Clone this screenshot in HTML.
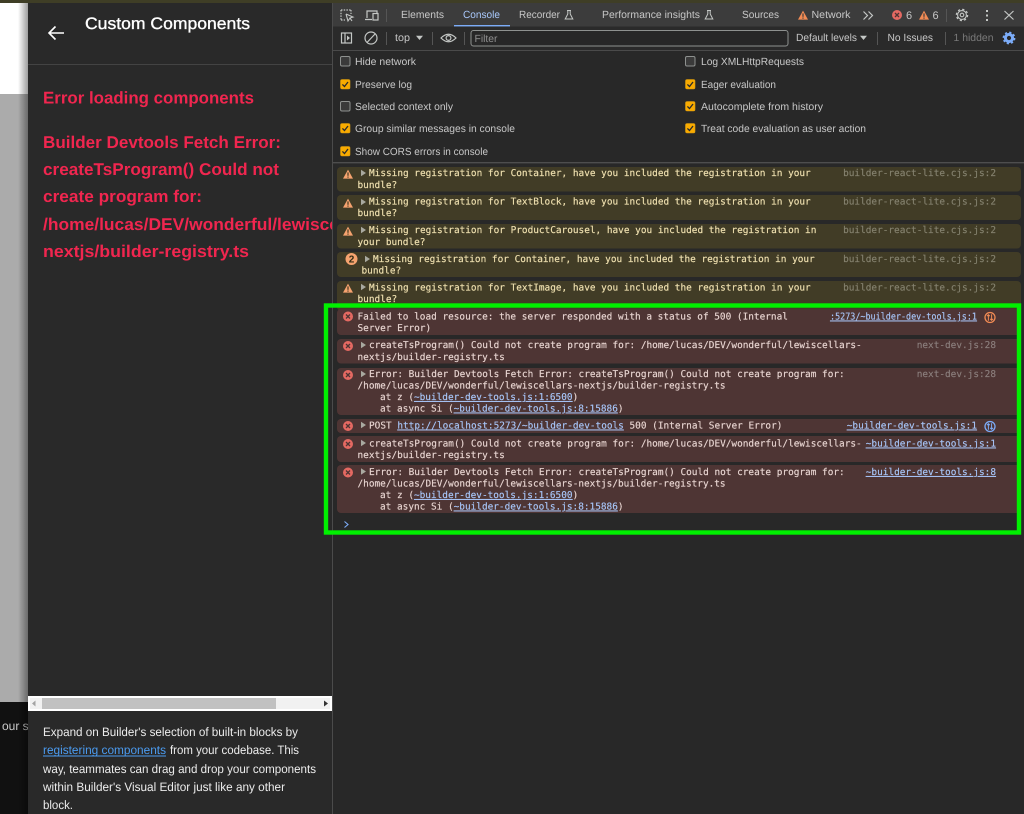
<!DOCTYPE html>
<html><head><meta charset="utf-8"><title>Custom Components</title>
<style>
html,body{margin:0;padding:0;background:#282828;width:1024px;height:814px;overflow:hidden}
svg{display:block;position:absolute;left:0;top:0;text-rendering:geometricPrecision}
.u{font-family:"Liberation Sans",sans-serif;font-size:10.4px;fill:#c7c7c7}
.m{font-family:"DejaVu Sans Mono",monospace;font-size:9.42px;stroke-width:.14px}
.w{fill:#f0e1b0;stroke:#f0e1b0}.e{fill:#e9d6d2;stroke:#e9d6d2}.s{fill:#85826f;stroke:#85826f;text-anchor:end}.se{fill:#8b7f7d;stroke:#8b7f7d;text-anchor:end}
.l{fill:#a8c7fa;stroke:#a8c7fa;text-decoration:underline}
.r{font-family:"Liberation Sans",sans-serif;font-weight:bold;font-size:17px;fill:#f0264f}
.b{font-family:"Liberation Sans",sans-serif;font-size:12.2px;fill:#ececec}
.ic{fill:none;stroke:#c4c7c5;stroke-width:1.2}
</style></head><body>
<svg width="1024" height="814" viewBox="0 0 1024 814">
<defs>
<clipPath id="pc"><rect x="28" y="0" width="304" height="814"/></clipPath>
<clipPath id="lc"><rect x="0" y="700" width="28" height="114"/></clipPath>
<clipPath id="wc"><rect x="333" y="160" width="691" height="144"/></clipPath>
<linearGradient id="sh" x1="0" x2="1" y1="0" y2="0"><stop offset="0" stop-color="#000" stop-opacity="0"/><stop offset="1" stop-color="#000" stop-opacity=".38"/></linearGradient>
<g id="warn"><path d="M0 4.6 L5 -4.4 L10 4.6 Z" fill="#f6a36f"/><rect x="4.4" y="-1.6" width="1.2" height="3.4" fill="#41391f"/><rect x="4.4" y="2.5" width="1.2" height="1.2" fill="#41391f"/></g>
<g id="err"><circle cx="5" cy="0" r="5" fill="#e46962"/><path d="M3 -2 L7 2 M7 -2 L3 2" stroke="#4e3534" stroke-width="1.3"/></g>
<path id="tri" d="M0 -3.2 L5 0 L0 3.2 Z" fill="#a9a9a0"/>
<g id="cb"><rect x="0.5" y="-4.5" width="9.5" height="9.5" rx="1.5" fill="#f9ab00" stroke="#d89a10" stroke-width=".6"/><path d="M2.4 0.4 L4.5 2.5 L8 -2" fill="none" stroke="#2a2a2a" stroke-width="1.3"/></g>
<g id="cu"><rect x="0.5" y="-4.5" width="9.5" height="9.5" rx="1.5" fill="#3a3a3a" stroke="#8e918f" stroke-width="1"/></g>
<g id="fl"><path d="M-2 -4.5 H2 M-1.2 -4.5 V-1 L-3.8 4 H3.8 L1.2 -1 V-4.5" fill="none" stroke="#c4c7c5" stroke-width="1"/></g>
<g id="net"><circle cx="0" cy="0" r="5" fill="none" stroke-width="1.3"/><path d="M-1.6 3.2 V-2.8 M-3 -1.4 L-1.6 -2.8 L-.2 -1.4 M1.6 -3.2 V2.8 M.2 1.4 L1.6 2.8 L3 1.4" fill="none" stroke-width="1"/></g>
</defs>

<!-- page behind -->
<rect x="0" y="0" width="1024" height="814" fill="#282828"/>
<rect x="0" y="3" width="28" height="91" fill="#ffffff"/>
<rect x="0" y="94" width="28" height="608" fill="#ababab"/>
<rect x="0" y="702" width="28" height="112" fill="#111111"/>
<text x="2" y="730" clip-path="url(#lc)" font-family="Liberation Sans,sans-serif" font-size="12px" fill="#c9c9c9">our se</text>
<rect x="18" y="3" width="10" height="811" fill="url(#sh)"/>
<rect x="0" y="0" width="1024" height="3" fill="#3f3e26"/>

<!-- left panel -->
<rect x="28" y="3" width="304" height="811" fill="#292929"/>
<rect x="28" y="64" width="304" height="1" fill="#434343"/>
<path d="M49.5 33 H64 M55.5 26.5 L49 33 L55.5 39.5" fill="none" stroke="#fff" stroke-width="1.6"/>
<text x="85" y="29" textLength="165" lengthAdjust="spacingAndGlyphs" font-family="Liberation Sans,sans-serif" font-size="16.5px" fill="#fff" stroke="#fff" stroke-width=".35">Custom Components</text>
<text class="r" x="43" y="103.5" textLength="211" lengthAdjust="spacingAndGlyphs">Error loading components</text>
<text class="r" x="43" y="148" textLength="238" lengthAdjust="spacingAndGlyphs">Builder Devtools Fetch Error:</text>
<text class="r" x="43" y="175" textLength="236" lengthAdjust="spacingAndGlyphs">createTsProgram() Could not</text>
<text class="r" x="43" y="202" textLength="159" lengthAdjust="spacingAndGlyphs">create program for:</text>
<g clip-path="url(#pc)"><text class="r" x="43" y="230" textLength="296" lengthAdjust="spacingAndGlyphs">/home/lucas/DEV/wonderful/lewisce</text></g>
<text class="r" x="43" y="257" textLength="206" lengthAdjust="spacingAndGlyphs">nextjs/builder-registry.ts</text>

<rect x="28" y="696" width="304" height="15" fill="#ffffff"/>
<rect x="30" y="698" width="300" height="11" fill="#f1f1f1"/>
<rect x="42" y="698" width="234" height="11" fill="#c1c1c1"/>
<path d="M35.5 700.5 V706.5 L32 703.5 Z" fill="#a3a3a3"/>
<path d="M324 700.5 V706.5 L328 703.5 Z" fill="#333"/>
<text class="b" x="43" y="736" textLength="255" lengthAdjust="spacingAndGlyphs">Expand on Builder's selection of built-in blocks by</text>
<text class="b" x="43" y="754" textLength="123" lengthAdjust="spacingAndGlyphs" style="fill:#4b9bf0">registering components</text>
<rect x="43" y="755.5" width="123" height="1" fill="#4b9bf0"/>
<text class="b" x="170" y="754" textLength="129" lengthAdjust="spacingAndGlyphs">from your codebase. This</text>
<text class="b" x="43" y="773" textLength="273" lengthAdjust="spacingAndGlyphs">way, teammates can drag and drop your components</text>
<text class="b" x="43" y="791" textLength="242" lengthAdjust="spacingAndGlyphs">within Builder's Visual Editor just like any other</text>
<text class="b" x="43" y="809" textLength="30" lengthAdjust="spacingAndGlyphs">block.</text>

<!-- devtools -->
<rect x="332" y="3" width="1" height="811" fill="#4b4b4b"/>
<rect x="333" y="3" width="691" height="811" fill="#282828"/>
<rect x="333" y="3" width="691" height="23" fill="#3c3c3c"/>
<rect x="333" y="26" width="691" height="24" fill="#2a2a2a"/>
<rect x="333" y="26" width="691" height="1" fill="#333"/>
<rect x="333" y="50" width="691" height="1" fill="#4a4a4a"/>
<rect x="333" y="162" width="691" height="1.4" fill="#4e4e4e"/>

<!-- tab row -->
<path d="M341 10 H351 M341 20 H345 M341 10 V20 M351 10 V14" fill="none" stroke="#c4c7c5" stroke-width="1.2" stroke-dasharray="1.5 1.2"/>
<path d="M346 14 L353 17 L350 18 L352 21 M346 14 L348 21 L350 18" fill="none" stroke="#c4c7c5" stroke-width="1.1"/>
<path class="ic" d="M367 18 V11 H377 V13 M365 19.5 H372"/><rect class="ic" x="373" y="13.5" width="5" height="6.5"/>
<rect x="386" y="9" width="1" height="13" fill="#555"/>
<text class="u" x="401" y="18" textLength="43" lengthAdjust="spacingAndGlyphs">Elements</text>
<text class="u" x="463" y="18" textLength="37" lengthAdjust="spacingAndGlyphs" style="fill:#a8c7fa">Console</text>
<rect x="454" y="25" width="56" height="1.4" fill="#7cacf8"/>
<text class="u" x="519" y="18" textLength="41" lengthAdjust="spacingAndGlyphs">Recorder</text>
<use href="#fl" x="569" y="15"/>
<text class="u" x="602" y="18" textLength="98" lengthAdjust="spacingAndGlyphs">Performance insights</text>
<use href="#fl" x="709" y="15"/>
<text class="u" x="742" y="18" textLength="37" lengthAdjust="spacingAndGlyphs">Sources</text>
<g transform="translate(798,15)"><path d="M0 4.6 L5 -4.4 L10 4.6 Z" fill="#f28b54"/><rect x="4.4" y="-1.6" width="1.2" height="3.4" fill="#3c3c3c"/><rect x="4.4" y="2.5" width="1.2" height="1.2" fill="#3c3c3c"/></g>
<text class="u" x="811.5" y="18" textLength="39" lengthAdjust="spacingAndGlyphs">Network</text>
<path class="ic" d="M863.5 11.5 L867.5 15.5 L863.5 19.5 M868.5 11.5 L872.5 15.5 L868.5 19.5"/>
<use href="#err" x="892" y="15"/>
<text class="u" x="906" y="19" style="font-size:11px">6</text>
<g transform="translate(919,15)"><path d="M0 4.6 L5 -4.4 L10 4.6 Z" fill="#f28b54"/><rect x="4.4" y="-1.6" width="1.2" height="3.4" fill="#3c3c3c"/><rect x="4.4" y="2.5" width="1.2" height="1.2" fill="#3c3c3c"/></g>
<text class="u" x="932.5" y="19" style="font-size:11px">6</text>
<rect x="946" y="9" width="1" height="13" fill="#555"/>
<g transform="translate(962,15)" fill="none" stroke="#c4c7c5"><circle r="5.6" stroke-width="1.3" stroke-dasharray="2.2 2.2"/><circle r="4.4" stroke-width="1.1"/><circle r="1.8" stroke-width="1.1"/></g>
<rect x="986" y="10" width="2" height="2" fill="#c4c7c5"/><rect x="986" y="14.5" width="2" height="2" fill="#c4c7c5"/><rect x="986" y="19" width="2" height="2" fill="#c4c7c5"/>
<path class="ic" d="M1004.5 11 L1013.5 19.5 M1013.5 11 L1004.5 19.5"/>

<!-- filter row -->
<rect class="ic" x="341.5" y="33" width="10" height="10"/><path class="ic" d="M345 33 V43"/><path d="M347 35.5 L350 38 L347 40.5 Z" fill="#c4c7c5"/>
<circle class="ic" cx="371" cy="38" r="6"/><path class="ic" d="M367 42.5 L375.5 33.5"/>
<rect x="386" y="32" width="1" height="13" fill="#555"/>
<text class="u" x="395" y="41" textLength="15" lengthAdjust="spacingAndGlyphs">top</text>
<path d="M416 35.8 H423 L419.5 40 Z" fill="#c4c7c5"/>
<rect x="432" y="32" width="1" height="13" fill="#555"/>
<path class="ic" d="M441 38 Q448.5 30.5 456 38 Q448.5 45.5 441 38 Z"/><circle class="ic" cx="448.5" cy="38" r="2.4"/>
<rect x="464" y="32" width="1" height="13" fill="#555"/>
<rect x="471" y="30.5" width="317" height="15.5" rx="2.5" fill="#272727" stroke="#8e918f" stroke-width="1"/>
<text class="u" x="474.5" y="42" textLength="23" lengthAdjust="spacingAndGlyphs" style="fill:#8f8f8f">Filter</text>
<text class="u" x="796" y="41" textLength="61" lengthAdjust="spacingAndGlyphs">Default levels</text>
<path d="M860 35.8 H867 L863.5 40 Z" fill="#c4c7c5"/>
<rect x="877" y="32" width="1" height="13" fill="#555"/>
<text class="u" x="887.5" y="41" textLength="45.5" lengthAdjust="spacingAndGlyphs">No Issues</text>
<rect x="945" y="32" width="1" height="13" fill="#555"/>
<text class="u" x="953.5" y="41" textLength="40" lengthAdjust="spacingAndGlyphs" style="fill:#7a7a7a">1 hidden</text>
<g transform="translate(1009,38)" fill="none"><circle r="3.6" stroke="#7cacf8" stroke-width="3"/><circle r="5.6" stroke="#7cacf8" stroke-width="1.6" stroke-dasharray="2.2 2.2"/></g>

<!-- settings -->
<g class="u" style="font-size:10.4px">
<use href="#cu" x="340" y="61"/><text class="u" x="355" y="65" textLength="61" lengthAdjust="spacingAndGlyphs">Hide network</text>
<use href="#cb" x="340" y="84"/><text class="u" x="355" y="88" textLength="57" lengthAdjust="spacingAndGlyphs">Preserve log</text>
<use href="#cu" x="340" y="106"/><text class="u" x="355" y="110" textLength="98" lengthAdjust="spacingAndGlyphs">Selected context only</text>
<use href="#cb" x="340" y="128"/><text class="u" x="355" y="132" textLength="160" lengthAdjust="spacingAndGlyphs">Group similar messages in console</text>
<use href="#cb" x="340" y="151"/><text class="u" x="355" y="155" textLength="133" lengthAdjust="spacingAndGlyphs">Show CORS errors in console</text>
<use href="#cu" x="685" y="61"/><text class="u" x="701" y="65" textLength="103" lengthAdjust="spacingAndGlyphs">Log XMLHttpRequests</text>
<use href="#cb" x="685" y="84"/><text class="u" x="701" y="88" textLength="75" lengthAdjust="spacingAndGlyphs">Eager evaluation</text>
<use href="#cb" x="685" y="106"/><text class="u" x="701" y="110" textLength="122" lengthAdjust="spacingAndGlyphs">Autocomplete from history</text>
<use href="#cb" x="685" y="128"/><text class="u" x="701" y="132" textLength="165" lengthAdjust="spacingAndGlyphs">Treat code evaluation as user action</text>
</g>

<!-- warnings -->
<g fill="#413c26">
<rect x="337" y="167" width="684" height="24.5" rx="4"/>
<rect x="337" y="195" width="684" height="25" rx="4"/>
<rect x="337" y="224" width="684" height="24.5" rx="4"/>
<rect x="337" y="252" width="684" height="25" rx="4"/>
<rect x="337" y="281" width="684" height="30" rx="4"/>
</g>
<g>
<use href="#warn" x="343" y="174"/><use href="#tri" x="361" y="173"/>
<text class="m w" x="369" y="176">Missing registration for Container, have you included the registration in your</text>
<text class="m w" x="357.5" y="188">bundle?</text>
<text class="m s" x="996" y="176">builder-react-lite.cjs.js:2</text>

<use href="#warn" x="343" y="203"/><use href="#tri" x="361" y="202"/>
<text class="m w" x="369" y="204.5">Missing registration for TextBlock, have you included the registration in your</text>
<text class="m w" x="357.5" y="216">bundle?</text>
<text class="m s" x="996" y="204.5">builder-react-lite.cjs.js:2</text>

<use href="#warn" x="343" y="231"/><use href="#tri" x="361" y="230"/>
<text class="m w" x="369" y="233">Missing registration for ProductCarousel, have you included the registration in</text>
<text class="m w" x="357.5" y="245">your bundle?</text>
<text class="m s" x="996" y="233">builder-react-lite.cjs.js:2</text>

<circle cx="351.5" cy="259" r="6" fill="#f6a36f"/>
<text x="351.5" y="262.5" text-anchor="middle" font-family="Liberation Sans,sans-serif" font-weight="bold" font-size="10px" fill="#332c14">2</text>
<use href="#tri" x="365" y="259"/>
<text class="m w" x="373" y="262">Missing registration for Container, have you included the registration in your</text>
<text class="m w" x="361.5" y="273.5">bundle?</text>
<text class="m s" x="996" y="262">builder-react-lite.cjs.js:2</text>

<use href="#warn" x="343" y="288"/><use href="#tri" x="361" y="287"/>
<text class="m w" x="369" y="290.5">Missing registration for TextImage, have you included the registration in your</text>
<g clip-path="url(#wc)"><text class="m w" x="357.5" y="302">bundle?</text></g>
<text class="m s" x="996" y="290.5">builder-react-lite.cjs.js:2</text>
</g>

<!-- errors -->
<g fill="#4e3534">
<rect x="337" y="309" width="684" height="26" rx="4"/>
<rect x="337" y="339" width="684" height="24.5" rx="4"/>
<rect x="337" y="368" width="684" height="47" rx="4"/>
<rect x="337" y="419" width="684" height="14" rx="4"/>
<rect x="337" y="436" width="684" height="26" rx="4"/>
<rect x="337" y="465" width="684" height="48" rx="4"/>
</g>

<use href="#err" x="343" y="316.5"/>
<text class="m e" x="357.5" y="319.5">Failed to load resource: the server responded with a status of 500 (Internal</text>
<text class="m e" x="357.5" y="331">Server Error)</text>
<text class="m l" x="830" y="319.5" textLength="147" lengthAdjust="spacingAndGlyphs">:5273/~builder-dev-tools.js:1</text>
<g transform="translate(990,317.5)" stroke="#f28b54"><use href="#net"/></g>

<use href="#err" x="343" y="346"/><use href="#tri" x="361" y="345"/>
<text class="m e" x="369" y="348">createTsProgram() Could not create program for: /home/lucas/DEV/wonderful/lewiscellars-</text>
<text class="m e" x="357.5" y="360">nextjs/builder-registry.ts</text>
<text class="m se" x="996" y="348">next-dev.js:28</text>

<use href="#err" x="343" y="375"/><use href="#tri" x="361" y="374"/>
<text class="m e" x="369" y="377">Error: Builder Devtools Fetch Error: createTsProgram() Could not create program for:</text>
<text class="m e" x="357.5" y="388.5">/home/lucas/DEV/wonderful/lewiscellars-nextjs/builder-registry.ts</text>
<text class="m e" x="380" y="400">at z (<tspan class="l">~builder-dev-tools.js:1:6500</tspan>)</text>
<text class="m e" x="380" y="411.5">at async Si (<tspan class="l">~builder-dev-tools.js:8:15886</tspan>)</text>
<text class="m se" x="996" y="377">next-dev.js:28</text>

<use href="#err" x="343" y="426"/><use href="#tri" x="361" y="425"/>
<text class="m e" x="369" y="428.5">POST <tspan class="l">http://localhost:5273/~builder-dev-tools</tspan> 500 (Internal Server Error)</text>
<text class="m l" x="977" y="428.5" text-anchor="end">~builder-dev-tools.js:1</text>
<g transform="translate(990,426.5)" stroke="#7cacf8"><use href="#net"/></g>

<use href="#err" x="343" y="444"/><use href="#tri" x="361" y="443"/>
<text class="m e" x="369" y="446.5">createTsProgram() Could not create program for: /home/lucas/DEV/wonderful/lewiscellars-</text>
<text class="m e" x="357.5" y="458">nextjs/builder-registry.ts</text>
<text class="m l" x="996" y="446.5" text-anchor="end">~builder-dev-tools.js:1</text>

<use href="#err" x="343" y="472.5"/><use href="#tri" x="361" y="471.5"/>
<text class="m e" x="369" y="475">Error: Builder Devtools Fetch Error: createTsProgram() Could not create program for:</text>
<text class="m e" x="357.5" y="486.5">/home/lucas/DEV/wonderful/lewiscellars-nextjs/builder-registry.ts</text>
<text class="m e" x="380" y="498">at z (<tspan class="l">~builder-dev-tools.js:1:6500</tspan>)</text>
<text class="m e" x="380" y="509.5">at async Si (<tspan class="l">~builder-dev-tools.js:8:15886</tspan>)</text>
<text class="m l" x="996" y="475" text-anchor="end">~builder-dev-tools.js:8</text>

<path d="M344.5 521.5 L348 524.5 L344.5 527.5" fill="none" stroke="#7cacf8" stroke-width="1.1"/>

<!-- green annotation -->
<rect x="326" y="305.5" width="693" height="227" fill="none" stroke="#00f000" stroke-width="4.4"/>
</svg>
</body></html>
